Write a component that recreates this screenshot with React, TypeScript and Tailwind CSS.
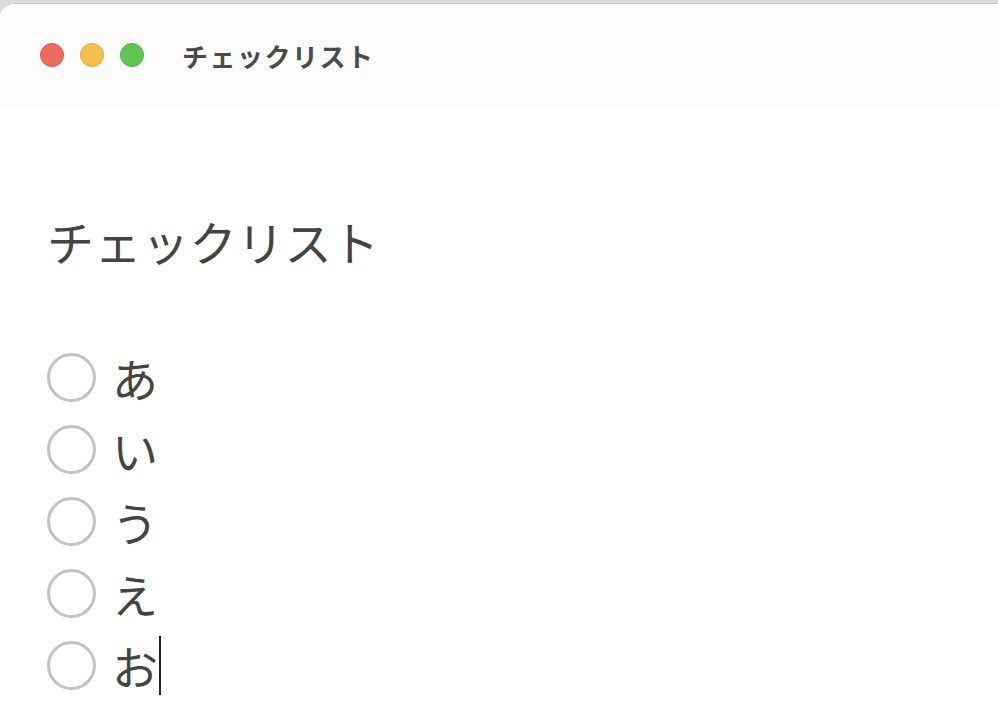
const items = ['あ', 'い', 'う', 'え', 'お'];

const jp = "font-['Hiragino_Sans','Noto_Sans_CJK_JP',sans-serif]";

export default function App() {
  return (
    <div className="h-[716px] w-[998px] overflow-hidden bg-[#dcdcdc] pt-[3px]">
      <div className="h-full rounded-tl-[14px] border-t border-[#c8c8c8] bg-white overflow-hidden">
        {/* title bar */}
        <div className="flex h-[104px] items-center bg-[#fcfcfc] pl-[40px]">
          <div className="flex gap-4 -mt-[2px]">
            <span className="size-6 rounded-full border border-[#d9574b] bg-[#ed6a5e]" />
            <span className="size-6 rounded-full border border-[#dea73e] bg-[#f5bf4f]" />
            <span className="size-6 rounded-full border border-[#52ae45] bg-[#61c554]" />
          </div>
          <h1 className={`${jp} ml-[38px] -mt-[2px] text-[26px] font-semibold tracking-[1.5px] text-[#4a4a4a]`}>
            チェックリスト
          </h1>
        </div>

        {/* content */}
        <div className={`${jp} pl-[47px] text-[#444]`}>
          <h2 className="mt-[109px] text-[47px] leading-none tracking-[0.5px]">チェックリスト</h2>
          <ul className="mt-[77px] flex flex-col">
            {items.map((t, i) => (
              <li key={t} className="flex h-[72px] items-center">
                <span className="size-[49px] rounded-full border-[3px] border-[#c2c2c2]" />
                <span className="ml-[16px] flex items-center text-[46px] leading-none">
                  {t}
                  {i === items.length - 1 && <span className="ml-[1px] h-[59px] w-[2px] bg-[#222]" />}
                </span>
              </li>
            ))}
          </ul>
        </div>
      </div>
    </div>
  );
}
